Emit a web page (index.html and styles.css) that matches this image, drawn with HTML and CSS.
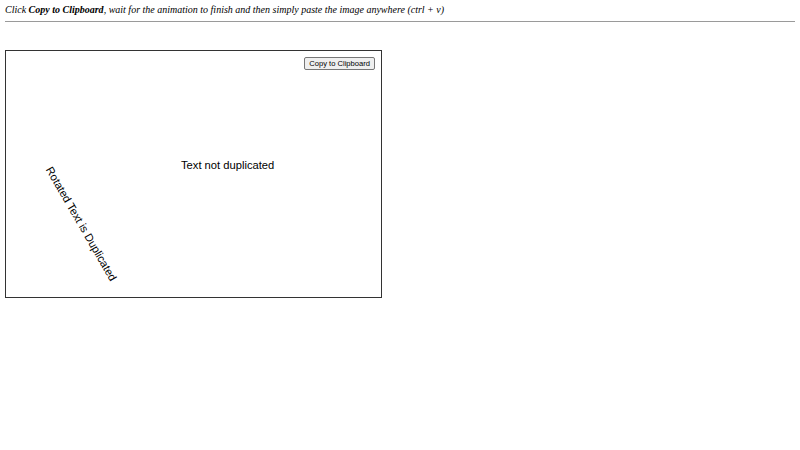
FILE: index.html
```html
<!DOCTYPE html>
<html>
<head>
<meta charset="utf-8">
<link rel="stylesheet" href="styles.css">
</head>
<body>
<p class="intro">Click <b>Copy to Clipboard</b>, wait for the animation to finish and then simply paste the image anywhere (ctrl + v)</p>
<div class="rule"></div>
<div class="stage">
  <button class="copy">Copy to Clipboard</button>
  <span class="plain">Text not duplicated</span>
  <span class="rotated">Rotated Text is Duplicated</span>
</div>
</body>
</html>
```
FILE: styles.css
```css
html, body {
  margin: 0;
  padding: 0;
  background: #fff;
}
body {
  padding: 0 5px;
  font-family: "Liberation Serif", serif;
}
.intro {
  margin: 0;
  padding-top: 4px;
  font-size: 10px;
  line-height: 12px;
  font-style: italic;
  color: #000;
}
.rule {
  margin-top: 5px;
  height: 1px;
  background: #9a9a9a;
}
.stage {
  position: relative;
  margin-top: 28px;
  width: 375px;
  height: 246px;
  border: 1px solid #333;
  font-family: "Liberation Sans", Arial, sans-serif;
}
.copy {
  position: absolute;
  top: 6px;
  right: 6px;
  height: 13px;
  padding: 0 4px;
  font-family: "Liberation Sans", Arial, sans-serif;
  font-size: 7.6px;
  line-height: 11px;
  color: #000;
  background: #efefef;
  border: 1px solid #767676;
  border-radius: 2px;
}
.plain {
  position: absolute;
  left: 175px;
  top: 107px;
  font-size: 11.2px;
  line-height: 14px;
  color: #000;
}
.rotated {
  position: absolute;
  left: 75px;
  top: 173px;
  font-size: 11.2px;
  line-height: 13px;
  color: #000;
  white-space: nowrap;
  transform: translate(-50%, -50%) rotate(60deg);
}
```
